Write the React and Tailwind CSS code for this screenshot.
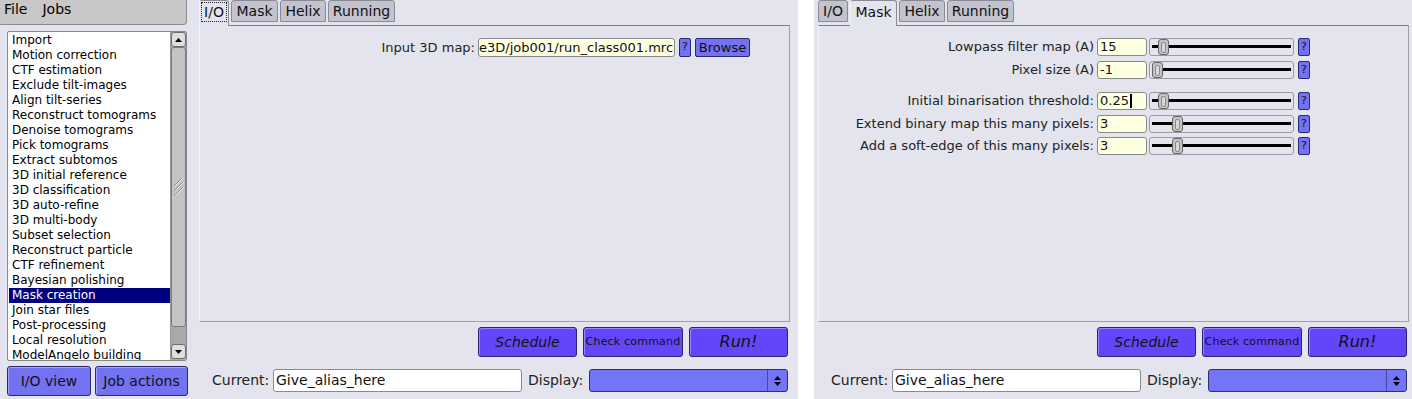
import React from 'react';

const jobs = [
  'Import', 'Motion correction', 'CTF estimation', 'Exclude tilt-images', 'Align tilt-series',
  'Reconstruct tomograms', 'Denoise tomograms', 'Pick tomograms', 'Extract subtomos',
  '3D initial reference', '3D classification', '3D auto-refine', '3D multi-body',
  'Subset selection', 'Reconstruct particle', 'CTF refinement', 'Bayesian polishing',
  'Mask creation', 'Join star files', 'Post-processing', 'Local resolution', 'ModelAngelo building',
];

const tabNames = ['I/O', 'Mask', 'Helix', 'Running'];
const tabWidths = ['w-[30px]', 'w-[47px]', 'w-[46px]', 'w-[67px]'];

function Scrollbar() {
  return (
    <div className="w-[16px] shrink-0 flex flex-col bg-[#a9a9a9] border-l border-[#9a9a9a]">
      <div className="h-[15px] shrink-0 bg-[#dedede] border border-[#6e6e6e] rounded-[3px] flex items-center justify-center">
        <svg width="7" height="4" viewBox="0 0 7 4"><path d="M0 4 L3.5 0 L7 4Z" fill="#000" /></svg>
      </div>
      <div className="h-[280px] shrink-0 bg-[#c4c4c4] border border-[#7a7a7a] rounded-[3px] flex items-center justify-center">
        <svg width="11" height="20" viewBox="0 0 11 20">
          <path d="M1 9 L9 1 M1 14 L10 5 M1 19 L10 10" stroke="#8a8a8a" strokeWidth="1" />
          <path d="M2 9 L10 1 M2 14 L11 5 M2 19 L11 10" stroke="#eeeeee" strokeWidth="1" />
        </svg>
      </div>
      <div className="h-[17px] shrink-0" />
      <div className="h-[15px] shrink-0 bg-[#dedede] border border-[#6e6e6e] rounded-[3px] flex items-center justify-center">
        <svg width="7" height="4" viewBox="0 0 7 4"><path d="M0 0 L3.5 4 L7 0Z" fill="#000" /></svg>
      </div>
    </div>
  );
}

function Sidebar() {
  return (
    <div className="w-[199px] shrink-0 flex flex-col">
      <div className="w-[187px] h-[25px] shrink-0 bg-[#c8c8c8] border-b border-r border-[#8e8e8e] rounded-br-[4px] text-[14px] leading-[16px] pt-[1px] flex text-black">
        <span className="ml-[4px]">File</span>
        <span className="ml-[15px]">Jobs</span>
      </div>
      <div className="ml-[7px] mt-[6px] w-[180px] h-[330px] shrink-0 bg-white border border-[#8a8a8a] rounded-[2px] flex overflow-hidden">
        <div className="flex-1 pt-[1px] overflow-hidden">
          {jobs.map((j) => (
            <div
              key={j}
              className={
                j === 'Mask creation'
                  ? 'ml-[1px] h-[15px] pl-[3px] text-[12px] leading-[15px] whitespace-nowrap bg-[#000080] text-white'
                  : 'ml-[1px] h-[15px] pl-[3px] text-[12px] leading-[15px] whitespace-nowrap text-black'
              }
            >
              {j}
            </div>
          ))}
        </div>
        <Scrollbar />
      </div>
      <div className="flex mt-[5px] ml-[7px] gap-[4px]">
        <div className="w-[84px] h-[30px] rounded-[3px] border border-[#2a2a6a] bg-[#7272f2] shadow-[inset_1px_1px_0_#a4a4ff] flex items-center justify-center text-[14px] text-[#111]">I/O view</div>
        <div className="w-[93px] h-[30px] rounded-[3px] border border-[#2a2a6a] bg-[#7272f2] shadow-[inset_1px_1px_0_#a4a4ff] flex items-center justify-center text-[14px] text-[#111]">Job actions</div>
      </div>
    </div>
  );
}

function Tabs({ active, focus }) {
  return (
    <div className="flex h-[25px] shrink-0 gap-[2px] items-start">
      {tabNames.map((n, i) =>
        i === active ? (
          <div key={n} className={`${tabWidths[i]} relative z-10 h-[26px] bg-[#e4e4ee] border-l border-t border-r border-l-[#f4f4f8] border-t-[#8a8a94] border-r-[#8a8a94] rounded-t-[3px] text-[14px] text-[#111]`}>
            <div className={focus ? 'h-[20px] mx-[1px] mt-[1px] border border-dotted border-[#222] flex items-center justify-center' : 'h-[22px] flex items-center justify-center'}>{n}</div>
          </div>
        ) : (
          <div key={n} className={`${tabWidths[i]} h-[22px] bg-[#c3c3cf] border border-[#8a8a94] rounded-t-[3px] flex items-center justify-center text-[14px] text-[#111]`}>
            {n}
          </div>
        )
      )}
    </div>
  );
}

function ActionButtons() {
  return (
    <div className="h-[30px] mt-[5px] shrink-0 flex justify-end gap-[6px] pr-[2px]">
      <div className="w-[99px] h-[30px] rounded-[3px] border border-[#2c2270] bg-[#6446fa] shadow-[inset_1px_1px_0_#9686ff] flex items-center justify-center text-[14px] italic text-[#111]">Schedule</div>
      <div className="w-[100px] h-[30px] rounded-[3px] border border-[#2c2270] bg-[#6446fa] shadow-[inset_1px_1px_0_#9686ff] flex items-center justify-center text-[11px] tracking-[0.2px] text-[#111]">Check command</div>
      <div className="w-[99px] h-[30px] rounded-[3px] border border-[#2c2270] bg-[#6446fa] shadow-[inset_1px_1px_0_#9686ff] flex items-center justify-center text-[16px] italic text-[#111]">Run!</div>
    </div>
  );
}

function BottomRow() {
  return (
    <div className="h-[23px] mt-[12px] shrink-0 flex items-center pl-[13px] text-[14px] text-[#222]">
      <div className="w-[61px]">Current:</div>
      <div className="w-[249px] h-[23px] bg-white border border-[#8a8a8a] rounded-[3px] pl-[2px] flex items-center text-[#111]">Give_alias_here</div>
      <div className="ml-[6px] w-[55px]">Display:</div>
      <div className="ml-[6px] w-[199px] h-[23px] rounded-[3px] border border-[#303070] bg-[#7474f8] flex justify-end">
        <div className="w-[20px] border-l border-[#4848a0] flex items-center justify-center">
          <svg width="7" height="12" viewBox="0 0 7 12"><path d="M0 5 L3.5 1 L7 5Z M0 7 L3.5 11 L7 7Z" fill="#000" /></svg>
        </div>
      </div>
    </div>
  );
}

function MainColumn({ active, focus, children }) {
  return (
    <div className="w-[591px] shrink-0 flex flex-col">
      <Tabs active={active} focus={focus} />
      <div className="h-[297px] shrink-0 border border-t-[#7e7e88] border-l-[#f6f6fa] border-r-[#a0a0aa] border-b-[#a0a0aa] pt-[12px] text-[13px] text-[#222]">
        {children}
      </div>
      <ActionButtons />
      <BottomRow />
    </div>
  );
}

function HelpBtn() {
  return (
    <div className="ml-[4px] w-[12px] h-full rounded-[2px] border border-[#2a2a6a] bg-[#7272f2] flex items-center justify-center text-[11px] text-[#111]">?</div>
  );
}

function Slider({ pos }) {
  return (
    <div className="relative ml-[2px] w-[145px] h-full rounded-[3px] border border-[#9a9aa4] bg-[#e4e4ee]">
      <div className="absolute left-[2px] right-[2px] top-[6px] h-[3px] bg-black" />
      <div className="absolute top-0 bottom-0 w-[11px] rounded-[3px] border border-[#666] bg-[#c4c4c4] flex justify-center" style={{ left: pos }}>
        <div className="mt-[2px] h-[11px] w-[5px] rounded-[2px] border border-[#8a8a8a] bg-[#d8d8d8]" />
      </div>
    </div>
  );
}

function SliderRow({ label, value, pos, cursor, className }) {
  return (
    <div className={`flex h-[18px] ${className}`}>
      <div className="w-[275px] text-right leading-[18px] whitespace-nowrap">{label}</div>
      <div className="ml-[3px] w-[50px] h-full bg-[#ffffe1] border border-[#8a8a8a] rounded-[3px] pl-[2px] flex items-center text-[#111]">
        {value}
        {cursor ? <span className="ml-[1px] w-[2px] h-[14px] bg-black" /> : null}
      </div>
      <Slider pos={pos} />
      <HelpBtn />
    </div>
  );
}

export default function App() {
  return (
    <div className="flex w-[1412px] h-[399px] bg-white font-['DejaVu_Sans',sans-serif] overflow-hidden">
      <div className="flex w-[798px] h-full shrink-0 bg-[#e4e4ee]">
        <Sidebar />
        <MainColumn active={0} focus>
          <div className="flex h-[19px]">
            <div className="w-[275px] text-right leading-[19px]">Input 3D map:</div>
            <div className="ml-[3px] w-[197px] h-full bg-[#ffffe1] border border-[#8a8a8a] rounded-[3px] overflow-hidden whitespace-nowrap flex items-center text-[#111]">e3D/job001/run_class001.mrc</div>
            <HelpBtn />
            <div className="ml-[4px] w-[55px] h-full rounded-[2px] border border-[#2a2a6a] bg-[#7272f2] flex items-center justify-center text-[13px] text-[#111]">Browse</div>
          </div>
        </MainColumn>
      </div>
      <div className="flex w-[598px] h-full shrink-0 ml-[16px] pl-[4px] bg-[#e4e4ee]">
        <MainColumn active={1}>
          <SliderRow label="Lowpass filter map (A)" value="15" pos={8} className="" />
          <SliderRow label="Pixel size (A)" value="-1" pos={2} className="mt-[5px]" />
          <SliderRow label="Initial binarisation threshold:" value="0.25" pos={8} cursor className="mt-[13px]" />
          <SliderRow label="Extend binary map this many pixels:" value="3" pos={22} className="mt-[5px]" />
          <SliderRow label="Add a soft-edge of this many pixels:" value="3" pos={22} className="mt-[4px]" />
        </MainColumn>
      </div>
    </div>
  );
}
